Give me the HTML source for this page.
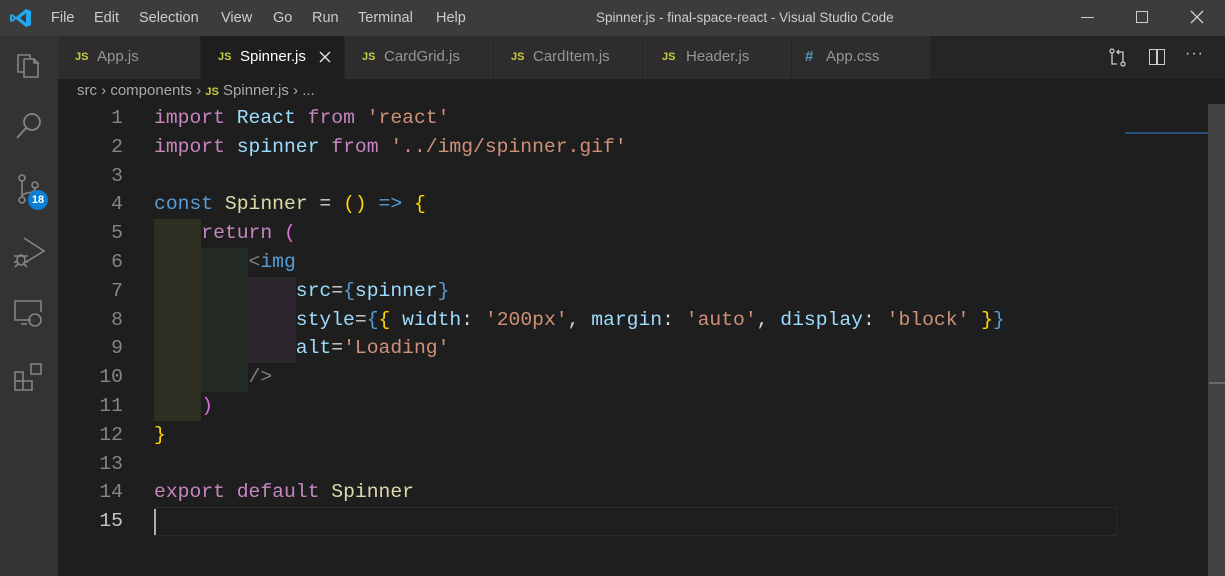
<!DOCTYPE html>
<html><head><meta charset="utf-8"><style>
*{margin:0;padding:0;box-sizing:border-box}
body{width:1225px;height:576px;overflow:hidden;background:#1e1e1e;font-family:"Liberation Sans",sans-serif;position:relative}
.title{position:absolute;left:0;top:0;width:1225px;height:36px;background:#3c3c3c;color:#ccc;font-size:14.5px}
.title .m{position:absolute;top:10px}
.act{position:absolute;left:0;top:36px;width:58px;height:540px;background:#333}
.tabs{position:absolute;left:58px;top:36px;width:1167px;height:43px;background:#252526}
.tab{position:absolute;top:0;height:43px;background:#2d2d2d;color:#969696;font-size:15px;border-right:1px solid #252526}
.tab span{position:absolute;top:12px}
.js{color:#cbcb41;font-weight:bold;font-size:11px;position:absolute;top:15px}
.crumb{position:absolute;left:77px;top:82px;color:#a9a9a9;font-size:15px}
.code{position:absolute;left:0;top:104px;font-family:"Liberation Mono",monospace;font-size:19.7px;}
.ln{position:absolute;left:60px;width:63px;text-align:right;color:#858585;height:28.8px;line-height:28.8px}
.l{position:absolute;left:154px;height:28.8px;line-height:28.8px;white-space:pre;color:#d4d4d4}
.k{color:#c586c0}.v{color:#9cdcfe}.s{color:#ce9178}.c{color:#569cd6}.f{color:#dcdcaa}.y{color:#ffd700}.p{color:#da70d6}.b{color:#179fff}.g{color:#808080}
</style></head><body>
<div class="title">
<svg style="position:absolute;left:10px;top:8px" width="22" height="20" viewBox="0 0 22 20"><path d="M16 1 L21 3 V17 L16 19 L6 11 L2 14 L0 13 V7 L2 6 L6 9 Z M16 5 L10 10 L16 15 Z M2 8 V12 L4 10 Z" fill="#23a9f2"/></svg>
<span class="m" style="left:51px">File</span><span class="m" style="left:94px">Edit</span><span class="m" style="left:139px">Selection</span><span class="m" style="left:221px">View</span><span class="m" style="left:273px">Go</span><span class="m" style="left:312px">Run</span><span class="m" style="left:358px">Terminal</span><span class="m" style="left:436px">Help</span>
<span class="m" style="left:596px;font-size:13.5px">Spinner.js - final-space-react - Visual Studio Code</span>
<div style="position:absolute;left:1081px;top:17px;width:13px;height:1px;background:#ccc"></div>
<div style="position:absolute;left:1136px;top:11px;width:12px;height:12px;border:1px solid #ccc"></div>
<svg style="position:absolute;left:1190px;top:10px" width="14" height="14"><path d="M1 1L13 13M13 1L1 13" stroke="#ccc" stroke-width="1.3"/></svg>
</div>
<div class="act">
<svg style="position:absolute;left:15px;top:14px" width="28" height="30" fill="none" stroke="#858585" stroke-width="1.6"><path d="M9 9V27H23V13M9 9H19L23 13H19V9"/><path d="M9 22H3V5H15V9"/></svg>
<svg style="position:absolute;left:15px;top:75px" width="30" height="30" fill="none" stroke="#858585" stroke-width="1.8"><circle cx="17" cy="11" r="8"/><path d="M11 17L2 27"/></svg>
<svg style="position:absolute;left:15px;top:137px" width="30" height="34" fill="none" stroke="#858585" stroke-width="1.6"><circle cx="7" cy="5" r="3"/><circle cx="7" cy="27" r="3"/><circle cx="20" cy="12" r="3"/><path d="M7 8V24M20 15C20 22 7 18 7 24"/></svg>
<div style="position:absolute;left:28px;top:154px;width:20px;height:20px;border-radius:10px;background:#0a7fd4;color:#fff;font-size:11px;font-weight:bold;text-align:center;line-height:20px">18</div>
<svg style="position:absolute;left:12px;top:200px" width="34" height="34" fill="none" stroke="#858585" stroke-width="1.6"><path d="M12 2L32 15L14 26"/><ellipse cx="9" cy="24" rx="4" ry="5"/><path d="M2 20H16M2 26H5M13 26H16M3 31L6 28M15 31L12 28"/></svg>
<svg style="position:absolute;left:13px;top:262px" width="32" height="30" fill="none" stroke="#858585" stroke-width="1.6"><path d="M18 22H2V3H28V14"/><path d="M8 26H14"/><circle cx="22" cy="22" r="6"/></svg>
<svg style="position:absolute;left:13px;top:326px" width="32" height="32" fill="none" stroke="#858585" stroke-width="1.6"><path d="M2 10H10V28H2ZM2 19H19V28H10M18 2H28V12H18Z"/></svg>
</div>
<div class="tabs">
<div class="tab" style="left:0;width:143px"><b class="js" style="left:17px">JS</b><span style="left:39px">App.js</span></div>
<div class="tab" style="left:143px;width:144px;background:#1e1e1e;color:#fff"><b class="js" style="left:17px">JS</b><span style="left:39px">Spinner.js</span>
<svg style="position:absolute;left:118px;top:15px" width="12" height="12"><path d="M1 1L11 11M11 1L1 11" stroke="#ddd" stroke-width="1.5"/></svg></div>
<div class="tab" style="left:287px;width:149px"><b class="js" style="left:17px">JS</b><span style="left:39px">CardGrid.js</span></div>
<div class="tab" style="left:436px;width:149px"><b class="js" style="left:17px">JS</b><span style="left:39px">CardItem.js</span></div>
<div class="tab" style="left:585px;width:149px"><b class="js" style="left:19px">JS</b><span style="left:43px">Header.js</span></div>
<div class="tab" style="left:734px;width:139px"><b style="position:absolute;left:13px;top:12px;color:#519aba;font-size:15px">#</b><span style="left:34px">App.css</span></div>
<svg style="position:absolute;left:1050px;top:12px" width="20" height="20" fill="none" stroke="#ccc" stroke-width="1.3"><circle cx="4" cy="3" r="2"/><circle cx="15" cy="16" r="2"/><path d="M4 5V16H9M15 14V4H10M11 2L9 4L11 6"/></svg>
<div style="position:absolute;left:1091px;top:13px;width:16px;height:16px;border:1.5px solid #ccc"></div><div style="position:absolute;left:1098px;top:13px;width:1.5px;height:16px;background:#ccc"></div>
<span style="position:absolute;left:1127px;top:9px;color:#ccc;font-size:16px;letter-spacing:1px">···</span>
</div>
<div class="crumb">src › components › <b style="color:#cbcb41;font-size:11px">JS</b> Spinner.js › ...</div>
<div style="position:absolute;left:154px;top:219px;width:47px;height:202px;background:#2f2e23"></div>
<div style="position:absolute;left:201px;top:248px;width:47px;height:144px;background:#242b24"></div>
<div style="position:absolute;left:248px;top:277px;width:48px;height:86px;background:#2e262f"></div>
<div style="position:absolute;left:154px;top:507px;width:963px;height:29px;border:1.5px solid #2b2b2b"></div>
<div style="position:absolute;left:154px;top:509px;width:2px;height:26px;background:#aeafad"></div>
<div style="position:absolute;left:1208px;top:104px;width:17px;height:472px;background:#424242"></div>
<div style="position:absolute;left:1209px;top:382px;width:16px;height:2px;background:#6a6a6a"></div>
<div style="position:absolute;left:1125px;top:132px;width:83px;height:2px;background:#264f78"></div>
<div class="code">
<div class="ln" style="top:0">1</div><div class="l" style="top:0"><span class="k">import</span> <span class="v">React</span> <span class="k">from</span> <span class="s">'react'</span></div>
<div class="ln" style="top:28.8px">2</div><div class="l" style="top:28.8px"><span class="k">import</span> <span class="v">spinner</span> <span class="k">from</span> <span class="s">'../img/spinner.gif'</span></div>
<div class="ln" style="top:57.6px">3</div>
<div class="ln" style="top:86.4px">4</div><div class="l" style="top:86.4px"><span class="c">const</span> <span class="f">Spinner</span> = <span class="y">()</span> <span class="c">=&gt;</span> <span class="y">{</span></div>
<div class="ln" style="top:115.2px">5</div><div class="l" style="top:115.2px">    <span class="k">return</span> <span class="p">(</span></div>
<div class="ln" style="top:144px">6</div><div class="l" style="top:144px">        <span class="g">&lt;</span><span class="c">img</span></div>
<div class="ln" style="top:172.8px">7</div><div class="l" style="top:172.8px">            <span class="v">src</span>=<span class="c">{</span><span class="v">spinner</span><span class="c">}</span></div>
<div class="ln" style="top:201.6px">8</div><div class="l" style="top:201.6px">            <span class="v">style</span>=<span class="c">{</span><span class="y">{</span> <span class="v">width</span>: <span class="s">'200px'</span>, <span class="v">margin</span>: <span class="s">'auto'</span>, <span class="v">display</span>: <span class="s">'block'</span> <span class="y">}</span><span class="c">}</span></div>
<div class="ln" style="top:230.4px">9</div><div class="l" style="top:230.4px">            <span class="v">alt</span>=<span class="s">'Loading'</span></div>
<div class="ln" style="top:259.2px">10</div><div class="l" style="top:259.2px">        <span class="g">/&gt;</span></div>
<div class="ln" style="top:288px">11</div><div class="l" style="top:288px">    <span class="p">)</span></div>
<div class="ln" style="top:316.8px">12</div><div class="l" style="top:316.8px"><span class="y">}</span></div>
<div class="ln" style="top:345.6px">13</div>
<div class="ln" style="top:374.4px">14</div><div class="l" style="top:374.4px"><span class="k">export</span> <span class="k">default</span> <span class="f">Spinner</span></div>
<div class="ln" style="top:403.2px;color:#c6c6c6">15</div>
</div>
</body></html>
